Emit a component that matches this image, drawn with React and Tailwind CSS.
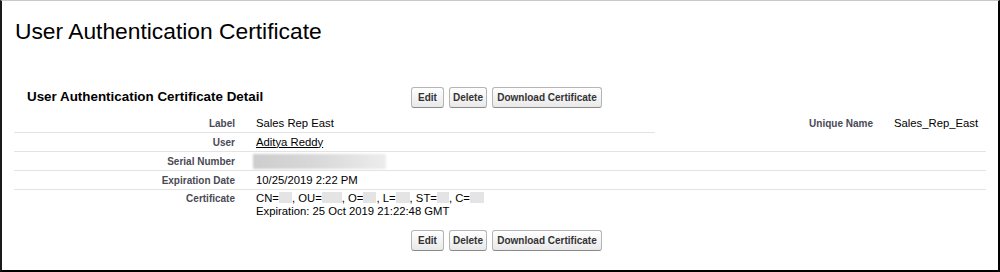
import React from "react";

function Btn({ children, w }) {
  return (
    <button
      className={`${w} h-[21px] rounded-[3px] border border-[#b5b5b5] border-b-[#8a8a8a] bg-gradient-to-b from-white to-[#e9e9e9] text-[10px] font-bold text-[#333] leading-[19px] text-center`}
    >
      {children}
    </button>
  );
}

function Buttons() {
  return (
    <div className="flex gap-[5px]">
      <Btn w="w-[33px]">Edit</Btn>
      <Btn w="w-[38px]">Delete</Btn>
      <Btn w="w-[110px]">Download Certificate</Btn>
    </div>
  );
}

function Blur({ w }) {
  return <span className={`inline-block ${w} h-[11px] align-[-1px] bg-[#e4e4e4] blur-[0.6px]`} />;
}

function Label({ children, className = "" }) {
  return (
    <div className={`w-[232px] shrink-0 pr-[11px] text-right text-[10px] font-bold text-[#4a4a56] ${className}`}>
      {children}
    </div>
  );
}

export default function App() {
  return (
    <div className="w-[1000px] h-[272px] box-border bg-white border-l-2 border-l-[#1a1a1a] border-t border-t-[#c8c8c8] border-r-2 border-r-black border-b-2 border-b-black font-['Liberation_Sans',Arial,sans-serif] text-black overflow-hidden">
      <h1 className="pt-[18px] pl-[13px] text-[22.8px] leading-[24px] font-normal">
        User Authentication Certificate
      </h1>

      <div className="ml-[12px] mt-[41px] w-[972px]">
        <div className="flex h-[27px] items-center">
          <div className="w-[397px] pl-[13px] text-[13.4px] font-bold">
            User Authentication Certificate Detail
          </div>
          <Buttons />
        </div>

        <div className="mt-[3px] text-[11.3px]">
          <div className="flex h-[19px]">
            <div className="flex w-[641px] items-center border-b border-[#e3e3e3]">
              <Label>Label</Label>
              <div className="pl-[10px]">Sales Rep East</div>
            </div>
            <div className="flex flex-1 items-center">
              <div className="w-[229px] shrink-0 pr-[11px] text-right text-[10px] font-bold text-[#4a4a56]">
                Unique Name
              </div>
              <div className="pl-[10px]">Sales_Rep_East</div>
            </div>
          </div>

          <div className="flex h-[19px] items-center border-b border-[#e3e3e3]">
            <Label>User</Label>
            <div className="pl-[10px]">
              <span className="underline">Aditya Reddy</span>
            </div>
          </div>

          <div className="flex h-[19px] items-center border-b border-[#e3e3e3]">
            <Label>Serial Number</Label>
            <div className="pl-[7px]">
              <div className="w-[133px] h-[15px] bg-gradient-to-r from-[#cdcdcd] via-[#d9d9d9] to-[#ededed] blur-[1px]" />
            </div>
          </div>

          <div className="flex h-[19px] items-center border-b border-[#e3e3e3]">
            <Label>Expiration Date</Label>
            <div className="pl-[10px]">10/25/2019 2:22 PM</div>
          </div>

          <div className="flex pt-[2px] leading-[13px]">
            <Label className="leading-[13px]">Certificate</Label>
            <div className="pl-[10px]">
              <div>
                CN=<Blur w="w-[13px]" />, OU=<Blur w="w-[20px]" />, O=<Blur w="w-[13px]" />, L=<Blur w="w-[14px]" />, ST=<Blur w="w-[12px]" />, C=<Blur w="w-[14px]" />
              </div>
              <div>Expiration: 25 Oct 2019 21:22:48 GMT</div>
            </div>
          </div>

          <div className="mt-[12px] pl-[397px]">
            <Buttons />
          </div>
        </div>
      </div>
    </div>
  );
}
